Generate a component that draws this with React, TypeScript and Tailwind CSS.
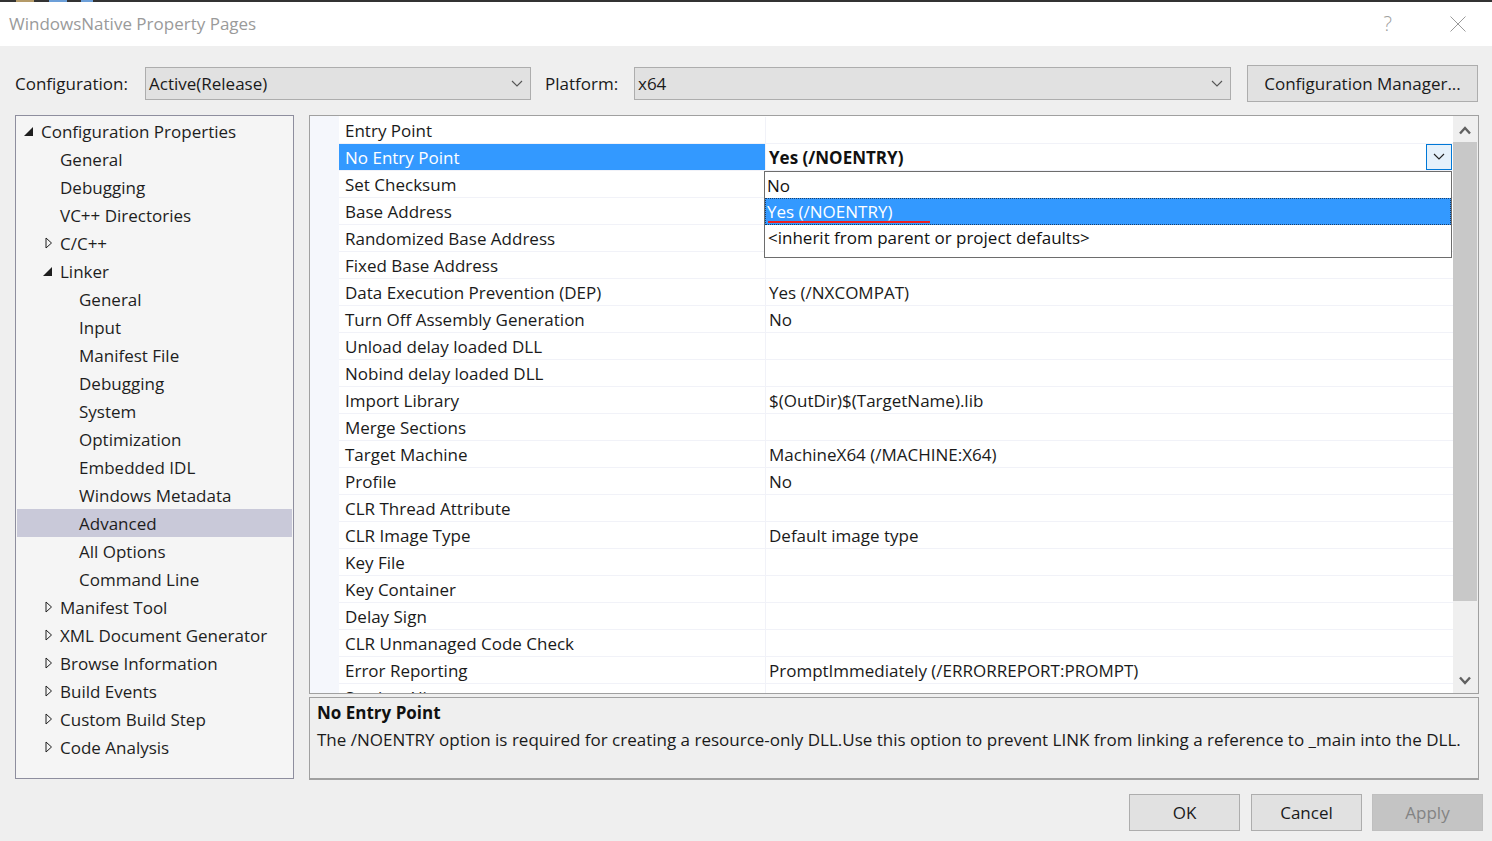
import React from "react";

type TreeItem = { label: string; level: 0 | 1 | 2; arrow?: "open" | "closed"; selected?: boolean };

const tree: TreeItem[] = [
  { label: "Configuration Properties", level: 0, arrow: "open" },
  { label: "General", level: 1 },
  { label: "Debugging", level: 1 },
  { label: "VC++ Directories", level: 1 },
  { label: "C/C++", level: 1, arrow: "closed" },
  { label: "Linker", level: 1, arrow: "open" },
  { label: "General", level: 2 },
  { label: "Input", level: 2 },
  { label: "Manifest File", level: 2 },
  { label: "Debugging", level: 2 },
  { label: "System", level: 2 },
  { label: "Optimization", level: 2 },
  { label: "Embedded IDL", level: 2 },
  { label: "Windows Metadata", level: 2 },
  { label: "Advanced", level: 2, selected: true },
  { label: "All Options", level: 2 },
  { label: "Command Line", level: 2 },
  { label: "Manifest Tool", level: 1, arrow: "closed" },
  { label: "XML Document Generator", level: 1, arrow: "closed" },
  { label: "Browse Information", level: 1, arrow: "closed" },
  { label: "Build Events", level: 1, arrow: "closed" },
  { label: "Custom Build Step", level: 1, arrow: "closed" },
  { label: "Code Analysis", level: 1, arrow: "closed" },
];

const rows: [string, string][] = [
  ["Entry Point", ""],
  ["No Entry Point", "Yes (/NOENTRY)"],
  ["Set Checksum", ""],
  ["Base Address", ""],
  ["Randomized Base Address", ""],
  ["Fixed Base Address", ""],
  ["Data Execution Prevention (DEP)", "Yes (/NXCOMPAT)"],
  ["Turn Off Assembly Generation", "No"],
  ["Unload delay loaded DLL", ""],
  ["Nobind delay loaded DLL", ""],
  ["Import Library", "$(OutDir)$(TargetName).lib"],
  ["Merge Sections", ""],
  ["Target Machine", "MachineX64 (/MACHINE:X64)"],
  ["Profile", "No"],
  ["CLR Thread Attribute", ""],
  ["CLR Image Type", "Default image type"],
  ["Key File", ""],
  ["Key Container", ""],
  ["Delay Sign", ""],
  ["CLR Unmanaged Code Check", ""],
  ["Error Reporting", "PromptImmediately (/ERRORREPORT:PROMPT)"],
  ["Section Alignment", ""],
];

function Chevron({ className, up }: { className?: string; up?: boolean }) {
  return (
    <svg width="12" height="8" viewBox="0 0 12 8" className={className} fill="none" stroke="currentColor" strokeWidth="1.1">
      <path d={up ? "M1 7L6 2L11 7" : "M1 1L6 6L11 1"} />
    </svg>
  );
}

function ThickChevron({ up }: { up?: boolean }) {
  return (
    <svg width="14" height="10" viewBox="0 0 14 10" fill="none" stroke="#606060" strokeWidth="2.4">
      <path d={up ? "M2 8.5L7 3L12 8.5" : "M2 1.5L7 7L12 1.5"} />
    </svg>
  );
}

function TreeRow({ item }: { item: TreeItem }) {
  const pad = item.level === 0 ? "pl-[7px]" : item.level === 1 ? "pl-[26px]" : "pl-[45px]";
  return (
    <div className={`flex h-[28px] shrink-0 items-center ${pad} ${item.selected ? "bg-[#c9c9d9]" : ""}`}>
      <span className="flex w-[17px] shrink-0 items-center">
        {item.arrow === "open" && (
          <svg width="11" height="11" viewBox="0 0 11 11" className="-ml-px">
            <path d="M1 10H10V1Z" fill="#1e1e1e" />
          </svg>
        )}
        {item.arrow === "closed" && (
          <svg width="8" height="12" viewBox="0 0 8 12" className="ml-[2px]" fill="none" stroke="#1e1e1e">
            <path d="M1 1L6.5 6L1 11Z" />
          </svg>
        )}
      </span>
      <span className="whitespace-nowrap pt-[2px] text-[#1e1e1e]">{item.label}</span>
    </div>
  );
}

function Button({ children, disabled, className }: { children: React.ReactNode; disabled?: boolean; className?: string }) {
  return (
    <div
      className={`flex h-[37px] shrink-0 items-center justify-center border ${
        disabled ? "border-[#bfbfbf] bg-[#c4c4c4] text-[#838383]" : "border-[#adadad] bg-[#e1e1e1] text-[#1a1a1a]"
      } ${className ?? ""}`}
    >
      {children}
    </div>
  );
}

function Select({ value, className }: { value: string; className: string }) {
  return (
    <div className={`flex h-[33px] shrink-0 items-center justify-between border border-[#adadad] bg-[#e1e1e1] pl-[3px] pr-[7px] ${className}`}>
      <span className="text-[#1a1a1a]">{value}</span>
      <Chevron className="text-[#555555]" />
    </div>
  );
}

export default function App() {
  return (
    <div
      className="flex h-[841px] w-[1492px] flex-col overflow-hidden bg-[#efefef] text-[17px] leading-[24px] text-[#1a1a1a]"
      style={{ fontFamily: '"Open Sans", "Noto Sans", sans-serif' }}
    >
      <div className="flex h-[2px] shrink-0 bg-[#333333]">
        <span className="ml-[16px] w-[18px] bg-[#b49a68]" />
        <span className="ml-[15px] w-[18px] bg-[#6c9fd8]" />
        <span className="ml-[14px] w-[12px] bg-[#6c9fd8]" />
      </div>
      <div className="flex h-[44px] shrink-0 items-center justify-between bg-white pl-[9px] pr-[26px]">
        <span className="text-[#9a9a9a]">WindowsNative Property Pages</span>
        <div className="flex items-center gap-[58px]">
          <span className="text-[20px] font-light text-[#a0a0a0]">?</span>
          <svg width="16" height="16" viewBox="0 0 16 16" stroke="#9a9a9a" strokeWidth="1">
            <path d="M0.5 0.5L15.5 15.5M15.5 0.5L0.5 15.5" />
          </svg>
        </div>
      </div>

      <div className="flex flex-1 flex-col pl-[15px] pr-[13px] pt-[19px]">
        <div className="flex h-[37px] items-center">
          <span className="w-[130px] shrink-0">Configuration:</span>
          <Select value="Active(Release)" className="w-[386px]" />
          <span className="ml-[14px] w-[89px] shrink-0">Platform:</span>
          <Select value="x64" className="w-[597px]" />
          <Button className="ml-[16px] w-[231px]">Configuration Manager...</Button>
        </div>

        <div className="mt-[13px] flex gap-[15px]">
          <div className="flex h-[664px] w-[279px] shrink-0 flex-col border border-[#8e8e9e] bg-[#f5f5f5] pl-px pr-px pt-[1px]">
            {tree.map((item, i) => (
              <TreeRow key={i} item={item} />
            ))}
          </div>

          <div className="flex w-[1170px] shrink-0 flex-col gap-[3px]">
            <div className="relative flex h-[579px] border border-[#a0a0a0] bg-white">
              <div className="w-[29px] shrink-0 bg-[#f5f7fc]" />
              <div className="flex min-w-0 flex-1 flex-col overflow-hidden pt-px">
                {rows.map(([name, value], i) => (
                  <div key={i} className="flex h-[27px] shrink-0 border-b border-[#f1f2f8]">
                    <div
                      className={`flex w-[426px] shrink-0 items-center pl-[6px] pt-[2px] ${
                        i === 1 ? "bg-[#3399ff] text-white" : "text-[#1a1a1a]"
                      }`}
                    >
                      {name}
                    </div>
                    <div
                      className={`relative flex flex-1 items-center border-l border-[#f1f2f8] pl-[3px] pt-[2px] ${
                        i === 1 ? "font-bold text-[#111111]" : "text-[#1a1a1a]"
                      }`}
                    >
                      {value}
                      {i === 1 && (
                        <div className="absolute right-px top-0 flex h-[26px] w-[26px] items-center justify-center border border-[#0078d7] bg-[#e5f1fb] text-[#222222]">
                          <Chevron />
                        </div>
                      )}
                    </div>
                  </div>
                ))}
              </div>
              <div className="flex w-[25px] shrink-0 flex-col items-center bg-[#efefef] pr-px">
                <div className="flex h-[26px] items-center justify-center pt-[2px]">
                  <ThickChevron up />
                </div>
                <div className="h-[459px] w-full bg-[#c8c8c8]" />
                <div className="flex flex-1 items-end justify-center pb-[7px]">
                  <ThickChevron />
                </div>
              </div>

              <div className="absolute left-[454px] top-[55px] flex h-[87px] w-[688px] flex-col border border-[#6d6d6d] bg-white">
                <div className="flex h-[26px] items-center pl-[2px] pt-[2px] text-[#111111]">No</div>
                <div className="relative flex h-[27px] items-center bg-[#3399ff] pl-[2px] text-white outline-1 -outline-offset-1 outline-dotted outline-[#1c3d66]">
                  Yes (/NOENTRY)
                  <span className="absolute left-[3px] top-[23px] h-[2px] w-[162px] bg-[#f02020]" />
                </div>
                <div className="flex h-[27px] items-center pb-[2px] pl-[3px] text-[#111111]">&lt;inherit from parent or project defaults&gt;</div>
              </div>
            </div>

            <div className="flex h-[83px] flex-col border border-b-2 border-[#a0a0a0] bg-[#efefef] pl-[7px] pt-[3px]">
              <div className="h-[27px] font-bold text-[#111111]">No Entry Point</div>
              <div className="h-[26px] whitespace-nowrap text-[#1a1a1a]">
                The /NOENTRY option is required for creating a resource-only DLL.Use this option to prevent LINK from linking a reference to _main into the DLL.
              </div>
            </div>
          </div>
        </div>

        <div className="-mr-[4px] mt-[14px] flex justify-end">
          <Button className="w-[111px]">OK</Button>
          <Button className="ml-[11px] w-[111px]">Cancel</Button>
          <Button disabled className="ml-[10px] w-[111px]">Apply</Button>
        </div>
      </div>
    </div>
  );
}
